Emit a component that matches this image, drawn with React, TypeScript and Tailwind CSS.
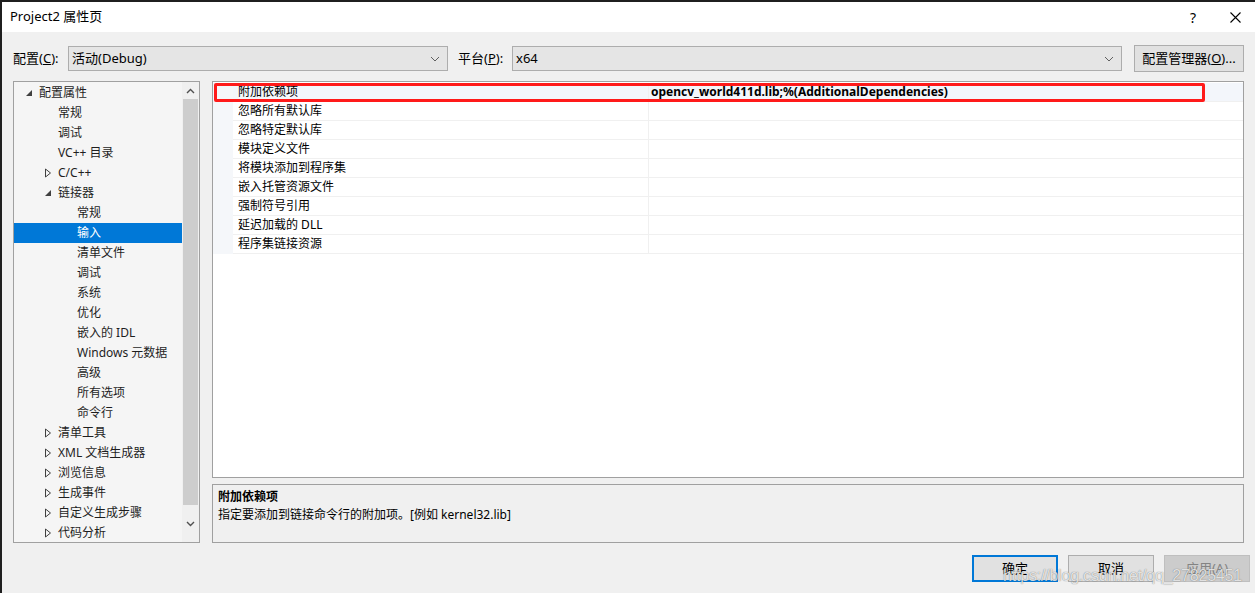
import React from 'react';

const FONT = { fontFamily: '"Noto Sans", "Noto Sans CJK SC", sans-serif' };

type TreeNode = { label: string; level: number; arrow?: 'open' | 'closed'; selected?: boolean };

const tree: TreeNode[] = [
  { label: '配置属性', level: 0, arrow: 'open' },
  { label: '常规', level: 1 },
  { label: '调试', level: 1 },
  { label: 'VC++ 目录', level: 1 },
  { label: 'C/C++', level: 1, arrow: 'closed' },
  { label: '链接器', level: 1, arrow: 'open' },
  { label: '常规', level: 2 },
  { label: '输入', level: 2, selected: true },
  { label: '清单文件', level: 2 },
  { label: '调试', level: 2 },
  { label: '系统', level: 2 },
  { label: '优化', level: 2 },
  { label: '嵌入的 IDL', level: 2 },
  { label: 'Windows 元数据', level: 2 },
  { label: '高级', level: 2 },
  { label: '所有选项', level: 2 },
  { label: '命令行', level: 2 },
  { label: '清单工具', level: 1, arrow: 'closed' },
  { label: 'XML 文档生成器', level: 1, arrow: 'closed' },
  { label: '浏览信息', level: 1, arrow: 'closed' },
  { label: '生成事件', level: 1, arrow: 'closed' },
  { label: '自定义生成步骤', level: 1, arrow: 'closed' },
  { label: '代码分析', level: 1, arrow: 'closed' },
];

const props = [
  { name: '附加依赖项', value: 'opencv_world411d.lib;%(AdditionalDependencies)' },
  { name: '忽略所有默认库', value: '' },
  { name: '忽略特定默认库', value: '' },
  { name: '模块定义文件', value: '' },
  { name: '将模块添加到程序集', value: '' },
  { name: '嵌入托管资源文件', value: '' },
  { name: '强制符号引用', value: '' },
  { name: '延迟加载的 DLL', value: '' },
  { name: '程序集链接资源', value: '' },
];

const indent = ['pl-[11px]', 'pl-[30px]', 'pl-[49px]'];

function Arrow({ kind }: { kind?: 'open' | 'closed' }) {
  if (kind === 'open') {
    return (
      <svg width="8" height="8" viewBox="0 0 8 8" className="shrink-0">
        <path d="M7 1 L7 7 L1 7 Z" fill="#404040" />
      </svg>
    );
  }
  if (kind === 'closed') {
    return (
      <svg width="8" height="10" viewBox="0 0 8 10" className="shrink-0">
        <path d="M1.5 1 L6.5 5 L1.5 9 Z" fill="none" stroke="#404040" strokeWidth="1" />
      </svg>
    );
  }
  return <span className="w-[8px] shrink-0" />;
}

function Chevron() {
  return (
    <svg width="10" height="6" viewBox="0 0 10 6">
      <path d="M1 1 L5 5 L9 1" fill="none" stroke="#606060" strokeWidth="1" />
    </svg>
  );
}

function Combo({ text, width }: { text: string; width: string }) {
  return (
    <div className={`flex h-[25px] items-center justify-between border border-[#adadad] bg-[#e5e5e5] pl-[3px] pr-[7px] ${width}`}>
      <span className="text-[13px] text-black">{text}</span>
      <Chevron />
    </div>
  );
}

export default function App() {
  return (
    <div className="relative h-[593px] w-[1255px] overflow-hidden border-l-2 border-t-2 border-[#1f1f1f] bg-[#f0f0f0] text-[12px] text-black" style={FONT}>
      {/* title bar */}
      <div className="flex h-[30px] items-center justify-between bg-white pl-[8px] pr-[14px]">
        <span className="text-[13px]">Project2 属性页</span>
        <div className="flex items-center gap-[34px] text-[14px]">
          <span>?</span>
          <svg width="11" height="11" viewBox="0 0 11 11">
            <path d="M0.5 0.5 L10.5 10.5 M10.5 0.5 L0.5 10.5" stroke="#000" strokeWidth="1.1" />
          </svg>
        </div>
      </div>

      {/* configuration row */}
      <div className="flex items-center pl-[11px] pt-[13px]">
        <span className="w-[55px] text-[13px]">配置(<u>C</u>):</span>
        <Combo text="活动(Debug)" width="w-[380px]" />
        <span className="ml-[10px] w-[54px] text-[13px]">平台(<u>P</u>):</span>
        <Combo text="x64" width="w-[610px]" />
        <div className="ml-[12px] flex h-[27px] w-[110px] items-center justify-center border border-[#adadad] bg-[#e1e1e1] text-[13px]">
          配置管理器(<u>O</u>)...
        </div>
      </div>

      {/* main area */}
      <div className="flex gap-[12px] pl-[11px] pt-[9px]">
        {/* tree */}
        <div className="flex h-[462px] w-[187px] border border-[#a0a0a0] bg-[#f5f5f5]">
          <div className="flex-1 pt-[1px]">
            {tree.map((n, i) => (
              <div
                key={i}
                className={`flex h-[20px] items-center gap-[6px] text-[12px] ${indent[n.level]} ${n.selected ? 'bg-[#0078d7] text-white' : 'text-[#1e1e1e]'}`}
              >
                <Arrow kind={n.arrow} />
                <span>{n.label}</span>
              </div>
            ))}
          </div>
          <div className="flex w-[17px] flex-col bg-[#f0f0f0]">
            <div className="flex h-[17px] items-center justify-center">
              <svg width="9" height="6" viewBox="0 0 9 6">
                <path d="M1 5 L4.5 1.5 L8 5" fill="none" stroke="#505050" strokeWidth="1.4" />
              </svg>
            </div>
            <div className="mx-[1px] h-[406px] bg-[#cdcdcd]" />
            <div className="flex flex-1 items-center justify-center">
              <svg width="9" height="6" viewBox="0 0 9 6">
                <path d="M1 1 L4.5 4.5 L8 1" fill="none" stroke="#505050" strokeWidth="1.4" />
              </svg>
            </div>
          </div>
        </div>

        {/* right side */}
        <div className="flex w-[1032px] flex-col gap-[6px]">
          <div className="h-[397px] border border-[#a0a0a0] bg-white pt-[1px]">
            {props.map((p, i) => (
              <div key={i} className={`relative flex h-[19px] items-stretch ${i === 0 ? 'bg-[#f3f6fb]' : ''}`}>
                <div className="w-[20px] bg-[#f5f7fa]" />
                <div className="flex w-[415px] items-center border-b border-[#f0f0f0] pl-[5px] text-[12px]">{p.name}</div>
                <div className="flex flex-1 items-center border-b border-l border-[#f0f0f0] pl-[2px] text-[12px] font-bold">{p.value}</div>
                {i === 0 && (
                  <div className="pointer-events-none absolute left-[1px] top-0 h-[19px] w-[991px] rounded-[2px] border-[3px] border-[#ff1a1a]" />
                )}
              </div>
            ))}
          </div>
          <div className="h-[59px] border border-[#a0a0a0] bg-[#f0f0f0] px-[5px] pt-[3px]">
            <div className="text-[12px] font-bold leading-[18px]">附加依赖项</div>
            <div className="text-[12px] leading-[18px]">指定要添加到链接命令行的附加项。[例如 kernel32.lib]</div>
          </div>
        </div>
      </div>

      {/* bottom buttons */}
      <div className="flex justify-end gap-[10px] pr-[5px] pt-[12px]">
        <div className="flex h-[27px] w-[86px] items-center justify-center border-2 border-[#0078d7] bg-[#e1e1e1] text-[13px]">确定</div>
        <div className="flex h-[27px] w-[86px] items-center justify-center border border-[#adadad] bg-[#e1e1e1] text-[13px]">取消</div>
        <div className="flex h-[27px] w-[86px] items-center justify-center border border-[#bfbfbf] bg-[#cccccc] text-[13px] text-[#838383]">应用(A)</div>
      </div>

      {/* watermark */}
      <div className="pointer-events-none absolute left-[1001px] top-[562px] text-[16px] tracking-[-0.2px] text-white/80 [text-shadow:0_0_1px_rgba(0,0,0,0.6)]" style={{ fontFamily: '"Liberation Sans", Arial, sans-serif' }}>
        https://blog.csdn.net/qq_27825451
      </div>
    </div>
  );
}
